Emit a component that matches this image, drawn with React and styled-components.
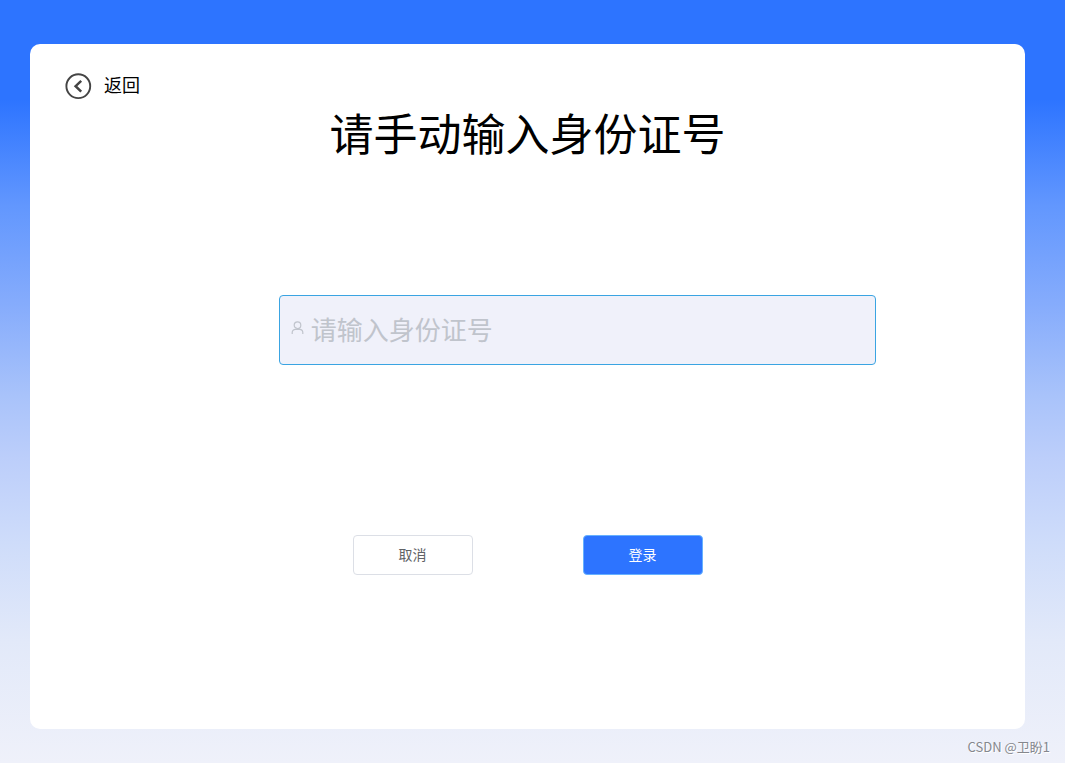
import React from "react";
import styled, { createGlobalStyle } from "styled-components";

const GlobalStyle = createGlobalStyle`
  * { box-sizing: border-box; }
  body {
    margin: 0;
    font-family: "Liberation Sans", "Noto Sans CJK SC", sans-serif;
    color: #000;
  }
  button, input { font-family: inherit; }
`;

const Page = styled.div`
  min-height: 100vh;
  display: flex;
  flex-direction: column;
  padding: 44px 40px 0 30px;
  background: linear-gradient(
    to bottom,
    #2d74ff 0%,
    #2d74ff 13%,
    #6297fe 27%,
    #86acfc 40%,
    #a9c3fa 52%,
    #bccefa 60%,
    #cedcfa 71%,
    #e2e9f9 84%,
    #eff1fa 100%
  );
`;

const Card = styled.main`
  flex: 1;
  display: flex;
  flex-direction: column;
  padding: 28px 0 40px;
  border-radius: 10px;
  background: #fff;
`;

const BackButton = styled.button`
  align-self: flex-start;
  display: flex;
  align-items: center;
  gap: 12px;
  height: 28px;
  margin-left: 35px;
  padding: 0;
  border: 0;
  background: none;
  color: #000;
  font-size: 18px;
  line-height: 28px;
  cursor: pointer;
`;

const Title = styled.h1`
  margin: 6px 0 0;
  font-size: 44px;
  font-weight: 400;
  line-height: 60px;
  text-align: center;
`;

const Form = styled.form`
  display: flex;
  flex-direction: column;
  margin-top: 129px;
`;

const Field = styled.label`
  display: flex;
  align-items: center;
  width: 60%;
  height: 70px;
  margin-left: 25%;
  padding: 2px 11px 0;
  gap: 7px;
  border: 1px solid #3aa4e2;
  border-radius: 4px;
  background: #f0f1fa;
  color: #c0c4cc;

  svg { flex: none; margin-bottom: 6px; }
`;

const IdInput = styled.input`
  flex: 1;
  min-width: 0;
  height: 60px;
  padding: 0;
  border: 0;
  outline: 0;
  background: transparent;
  color: #606266;
  font-size: 26px;

  &::placeholder { color: #c0c4cc; opacity: 1; }
`;

const Actions = styled.div`
  display: flex;
  justify-content: center;
  gap: 110px;
  margin-top: 170px;
`;

const ActionButton = styled.button`
  width: 120px;
  height: 40px;
  padding: 0 0 2px;
  border: 1px solid ${(p) => (p.$primary ? "#66b1ff" : "#dcdfe6")};
  border-radius: 4px;
  background: ${(p) => (p.$primary ? "#2d74ff" : "#fff")};
  color: ${(p) => (p.$primary ? "#fff" : "#606266")};
  font-size: 14px;
  cursor: pointer;
`;

const Credit = styled.footer`
  height: 34px;
  margin-right: -25px;
  color: #85878d;
  font-family: "Noto Sans CJK SC", sans-serif;
  font-size: 13px;
  line-height: 36px;
  text-align: right;
  text-shadow: 1px 1px 0 #fff;
`;

const BackIcon = () => (
  <svg width="27" height="27" viewBox="0 0 27 27" fill="none" stroke="#444" aria-hidden="true">
    <circle cx="13.3" cy="13.2" r="11.9" strokeWidth="1.9" />
    <path d="M16.2 7.8 10.6 13.2 16.2 18.6" strokeWidth="2.5" />
  </svg>
);

const UserIcon = () => (
  <svg width="13" height="14" viewBox="0 0 13 14" fill="none" stroke="currentColor" strokeWidth="1.2" aria-hidden="true">
    <circle cx="6.5" cy="4.2" r="3.3" />
    <path d="M1.2 13V11.6C1.2 9.6 2.7 8.4 4.5 8.4H8.5C10.3 8.4 11.8 9.6 11.8 11.6V13" />
  </svg>
);

export default function App() {
  return (
    <>
      <GlobalStyle />
      <Page lang="zh-CN">
        <Card>
          <BackButton type="button">
            <BackIcon />
            返回
          </BackButton>
          <Title>请手动输入身份证号</Title>
          <Form onSubmit={(e) => e.preventDefault()}>
            <Field>
              <UserIcon />
              <IdInput type="text" aria-label="身份证号" placeholder="请输入身份证号" />
            </Field>
            <Actions>
              <ActionButton type="button">取消</ActionButton>
              <ActionButton type="submit" $primary>登录</ActionButton>
            </Actions>
          </Form>
        </Card>
        <Credit>CSDN @卫盼1</Credit>
      </Page>
    </>
  );
}
